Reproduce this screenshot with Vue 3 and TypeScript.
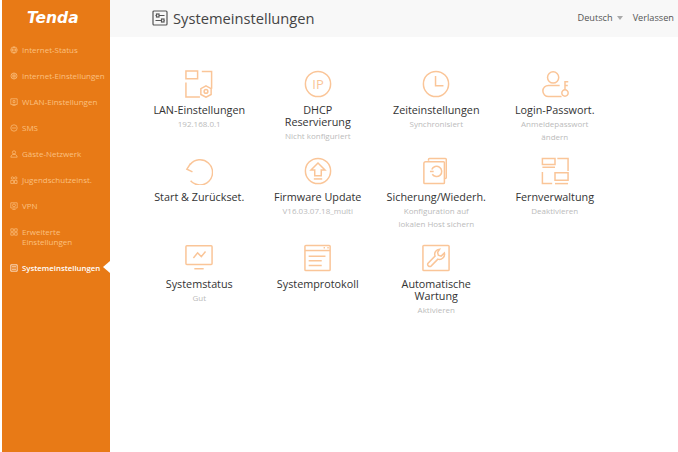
<template>
  <div class="page">
    <aside class="sidebar">
      <div class="logo">Tenda</div>
      <nav class="nav">
        <a
          v-for="item in navItems"
          :key="item.label"
          class="nav-item"
          :class="{ active: item.active }"
        >
          <svg class="nav-icon" viewBox="0 0 10 10" fill="none" stroke="currentColor" stroke-width="0.9">
            <path :d="item.icon" />
          </svg>
          <span class="nav-label">{{ item.label }}</span>
        </a>
      </nav>
    </aside>

    <main class="main">
      <header class="header">
        <svg class="title-icon" viewBox="0 0 16 16" fill="none" stroke="#555" stroke-width="1.2">
          <rect x="1" y="1" width="14" height="14" rx="1" />
          <path d="M3.5 5.5h9M3.5 10.5h9" />
          <rect x="4.5" y="4" width="2.5" height="3" fill="#f8f8f8" />
          <rect x="9.5" y="9" width="2.5" height="3" fill="#f8f8f8" />
        </svg>
        <h1 class="title">Systemeinstellungen</h1>
        <div class="header-right">
          <span class="lang">Deutsch<i class="caret"></i></span>
          <span class="quit">Verlassen</span>
        </div>
      </header>

      <section class="grid">
        <div v-for="tile in tiles" :key="tile.title" class="tile">
          <svg class="tile-icon" viewBox="0 0 30 30" fill="none" stroke="#fac598" stroke-width="1.6">
            <path v-for="d in tile.paths" :key="d" :d="d" />
            <text
              v-if="tile.iconText"
              x="15"
              y="20"
              text-anchor="middle"
              class="ip-text"
            >{{ tile.iconText }}</text>
          </svg>
          <div class="tile-title">{{ tile.title }}</div>
          <div v-if="tile.sub" class="tile-sub">{{ tile.sub }}</div>
        </div>
      </section>
    </main>
  </div>
</template>

<script setup lang="ts">
interface NavItem {
  label: string
  icon: string
  active?: boolean
}

interface Tile {
  title: string
  sub?: string
  paths: string[]
  iconText?: string
}

const circle = (cx: number, cy: number, r: number) =>
  `M${cx - r} ${cy}a${r} ${r} 0 1 0 ${r * 2} 0a${r} ${r} 0 1 0 ${-r * 2} 0z`

const navItems: NavItem[] = [
  { label: 'Internet-Status', icon: `${circle(5, 5, 4)}M1 5h8M5 1c-2.4 2.4-2.4 5.6 0 8M5 1c2.4 2.4 2.4 5.6 0 8` },
  { label: 'Internet-Einstellungen', icon: `${circle(5, 5, 3.8)}${circle(5, 5, 1.2)}M5 1.2v2.6M5 6.2v2.6M1.7 3l2.3 1.4M6 5.6l2.3 1.4M1.7 7L4 5.6M6 4.4L8.3 3` },
  { label: 'WLAN-Einstellungen', icon: 'M1 1h8v7H1zM3 9.2h4M3.8 3.2h2.4v2.6H3.8z' },
  { label: 'SMS', icon: `${circle(5, 5, 4)}M2.5 5h5` },
  { label: 'Gäste-Netzwerk', icon: `${circle(5, 3, 2)}M1 9c.4-2.6 1.8-3.6 4-3.6S8.6 6.4 9 9z` },
  { label: 'Jugendschutzeinst.', icon: `${circle(3, 2.5, 1.5)}${circle(7.2, 2.5, 1.5)}M1 5.5h3.6v3.8H1zM5.6 5.5h3.2v3.8H5.6z` },
  { label: 'VPN', icon: `M1 1h8v6.5H1zM3 9.2h4${circle(5, 4.2, 1.8)}` },
  { label: 'Erweiterte\nEinstellungen', icon: 'M1 1h3.2v3.2H1zM5.8 1H9v3.2H5.8zM1 5.8h3.2V9H1zM5.8 5.8H9V9H5.8z' },
  { label: 'Systemeinstellungen', icon: 'M1 1h8v8H1zM2.5 3.5h5M2.5 6.5h5', active: true },
]

const tiles: Tile[] = [
  {
    title: 'LAN-Einstellungen',
    sub: '192.168.0.1',
    paths: [
      'M1 1h12.5v8.5H1z',
      'M18 1.5h10.5V20',
      'M1 13.5V29h15',
      'M22.5 17l5.5 3v6.2l-5.5 3-5.5-3V20z',
      circle(22.5, 23, 2),
    ],
  },
  {
    title: 'DHCP\nReservierung',
    sub: 'Nicht konfiguriert',
    paths: [circle(15, 15, 13.5)],
    iconText: 'IP',
  },
  {
    title: 'Zeiteinstellungen',
    sub: 'Synchronisiert',
    paths: [circle(15, 15, 13.5), 'M14.5 6.5V17H23'],
  },
  {
    title: 'Login-Passwort.',
    sub: 'Anmeldepasswort\nändern',
    paths: [
      circle(13, 8, 6),
      'M20 16.5H8a6 6 0 0 0 0 12h14',
      circle(25.7, 24.6, 3.4),
      'M25.7 21.2V12.5h3.5M25.7 16.5h3',
    ],
  },
  {
    title: 'Start & Zurückset.',
    paths: ['M5.5 8A13.5 13.5 0 1 1 6 25.5', 'M6 7L2 13l6 3'],
  },
  {
    title: 'Firmware Update',
    sub: 'V16.03.07.18_multi',
    paths: [circle(15, 15, 13.5), 'M15 6.5L7.5 14h4v6h7v-6h4z', 'M10.5 23.5h9'],
  },
  {
    title: 'Sicherung/Wiederh.',
    sub: 'Konfiguration auf\nlokalen Host sichern',
    paths: [
      'M7 4V2.5a1 1 0 0 1 1-1h17a1 1 0 0 1 1 1V22a1 1 0 0 1-1 1h-1.5',
      'M4 5h19a1 1 0 0 1 1 1v21.5a1 1 0 0 1-1 1H3a1 1 0 0 1-1-1V7a2 2 0 0 1 2-2z',
      'M10.5 13.5a5.5 5.5 0 1 1 .5 5',
      'M8.5 15.5h4',
    ],
  },
  {
    title: 'Fernverwaltung',
    sub: 'Deaktivieren',
    paths: [
      'M1.5 1.5H15V8H1.5z',
      'M1.5 11H15',
      'M17.5 1.5H29V15',
      'M1.5 16v12.5H12',
      'M15 17h14v8H15z',
      'M15 28.5h14',
    ],
  },
  {
    title: 'Systemstatus',
    sub: 'Gut',
    paths: ['M2 2h26a1 1 0 0 1 1 1v18a1 1 0 0 1-1 1H2a1 1 0 0 1-1-1V3a1 1 0 0 1 1-1z', 'M9 15l4.5-5.5 4 4L22 8', 'M10 26.5h10'],
  },
  {
    title: 'Systemprotokoll',
    paths: [
      'M2 1.5h25a1 1 0 0 1 1 1v25a1 1 0 0 1-1 1H2a1 1 0 0 1-1-1v-25a1 1 0 0 1 1-1z',
      'M1 7h27',
      'M21 4h1.5M25 4h1.5',
      'M5 13h18M5 18h14M5 23h14',
    ],
  },
  {
    title: 'Automatische\nWartung',
    sub: 'Aktivieren',
    paths: [
      'M2 1.5h26a1 1 0 0 1 1 1v25a1 1 0 0 1-1 1H2a1 1 0 0 1-1-1v-25a1 1 0 0 1 1-1z',
      'M19 5.5a5.5 5.5 0 0 0-5 7.5L6.5 20.5a2.3 2.3 0 0 0 3.2 3.2L17 16.2a5.5 5.5 0 0 0 7-6.5l-3.5 3.3-3-1-.8-3z',
    ],
  },
]
</script>

<style>
html,
body {
  margin: 0;
  background: #fff;
}
</style>

<style scoped>
.page {
  display: flex;
  width: 678px;
  height: 452px;
  padding-left: 2px;
  box-sizing: border-box;
  overflow: hidden;
  font-family: "Open Sans", "Noto Sans", sans-serif;
  background: #fff;
}

.sidebar {
  flex: 0 0 108px;
  background: #e87a16;
}

.logo {
  height: 37px;
  line-height: 36px;
  padding-left: 25px;
  font-family: "DejaVu Sans", sans-serif;
  font-size: 15.5px;
  font-weight: 700;
  font-style: italic;
  color: #fff;
}

.nav {
  display: flex;
  flex-direction: column;
  gap: 13px;
  padding-top: 6px;
}

.nav-item {
  position: relative;
  display: flex;
  align-items: center;
  min-height: 13px;
  padding-left: 8px;
  font-size: 8px;
  font-weight: 500;
  line-height: 10px;
  color: #fbc080;
}

.nav-item:nth-last-child(2) {
  align-items: flex-start;
  margin-top: 2px;
  margin-bottom: 1px;
}

.nav-item:nth-last-child(2) .nav-icon {
  margin-top: 1px;
}

.nav-item.active {
  font-size: 7.8px;
  font-weight: 600;
  color: #fff;
}

.nav-item.active::after {
  content: "";
  position: absolute;
  right: 0;
  top: 0;
  border-style: solid;
  border-width: 6.5px 7px 6.5px 0;
  border-color: transparent #fff transparent transparent;
}

.nav-icon {
  flex: 0 0 8px;
  width: 8px;
  height: 8px;
  margin-right: 4px;
}

.nav-label {
  white-space: pre-line;
}

.main {
  flex: 1;
  min-width: 0;
}

.header {
  display: flex;
  align-items: center;
  height: 37px;
  padding: 0 4px 2px 42px;
  box-sizing: border-box;
  background: #f8f8f8;
}

.title-icon {
  width: 16px;
  height: 16px;
  margin-right: 5px;
}

.title {
  margin: 0;
  font-size: 14.7px;
  font-weight: 400;
  color: #444;
}

.header-right {
  display: flex;
  align-items: center;
  gap: 10px;
  margin-left: auto;
  font-size: 9.2px;
  color: #555;
}

.caret {
  display: inline-block;
  margin-left: 4px;
  vertical-align: 1px;
  border-style: solid;
  border-width: 4px 3.5px 0;
  border-color: #aaa transparent transparent;
}

.grid {
  display: grid;
  grid-template-columns: repeat(4, 118.5px);
  grid-auto-rows: 87px;
  padding: 33px 0 0 30px;
}

.tile {
  display: flex;
  flex-direction: column;
  align-items: center;
  text-align: center;
}

.tile-icon {
  flex: none;
  width: 28px;
  height: 28px;
}

.ip-text {
  fill: #fac598;
  stroke: none;
  font-size: 14px;
}

.tile-title {
  margin-top: 6px;
  font-size: 10.8px;
  line-height: 12px;
  white-space: pre-line;
  color: #333;
}

.tile-sub {
  margin-top: 1px;
  font-size: 8px;
  line-height: 13px;
  white-space: pre-line;
  color: #bbb;
}
</style>
